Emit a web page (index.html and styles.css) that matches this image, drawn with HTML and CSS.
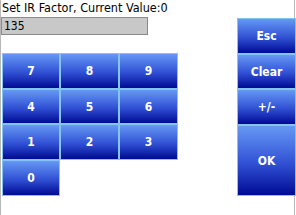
FILE: index.html
```html
<!DOCTYPE html>
<html lang="en">
<head>
    <meta charset="UTF-8">
    <meta name="viewport" content="width=device-width, initial-scale=1.0">
    <title>IR Factor</title>
    <link rel="stylesheet" href="styles.css">
</head>
<body>
  <div id="tela">
    <div id="coluna-esq">
      <p id="titulo">Set IR Factor, Current Value:0</p>
      <div id="entrada">135</div>
      <div id="teclado">
        <button class="tecla">7</button>
        <button class="tecla">8</button>
        <button class="tecla">9</button>
        <button class="tecla">4</button>
        <button class="tecla">5</button>
        <button class="tecla">6</button>
        <button class="tecla">1</button>
        <button class="tecla">2</button>
        <button class="tecla">3</button>
        <button class="tecla">0</button>
      </div>
    </div>
    <div id="coluna-dir">
      <button class="tecla">Esc</button>
      <button class="tecla">Clear</button>
      <button class="tecla">+/-</button>
      <button class="tecla tecla-ok">OK</button>
    </div>
  </div>
</body>
</html>
```

FILE: styles.css
```css
*{
  margin: 0;
  padding: 0;
  box-sizing: border-box;
}

body{
  width: 296px;
  height: 215px;
  overflow: hidden;
  background-color: #fff;
  background-image: linear-gradient(#b8b8b8, #b8b8b8), linear-gradient(#b8b8b8, #b8b8b8);
  background-repeat: no-repeat;
  background-size: 1px 100%, 1px 100%;
  background-position: 0 0, 294px 0;
  font-family: 'DejaVu Sans Condensed', 'DejaVu Sans', sans-serif;
}

#tela{
  display: flex;
  padding-left: 2px;
}

#coluna-esq{
  width: 235px;
}

#titulo{
  height: 17px;
  line-height: 15px;
  font-size: 12.5px;
  color: #000;
}

#entrada{
  width: 147px;
  height: 18px;
  margin-left: -1px;
  border: 1px solid #8a8a8a;
  background-color: #c8c8c8;
  font-size: 12px;
  line-height: 16px;
  padding-left: 2px;
}

#teclado{
  margin-top: 18px;
  display: grid;
  grid-template-columns: 58px 59px 59px;
  grid-template-rows: 36px 35px 36px 36px;
  width: 176px;
}

#coluna-dir{
  margin-top: 18px;
  display: flex;
  flex-direction: column;
  width: 59px;
}

.tecla{
  border: 1px solid #84c4f0;
  background: linear-gradient(#6698f4, #3050d4 55%, #000a94);
  color: #fff;
  font-family: 'DejaVu Sans Condensed', 'DejaVu Sans', sans-serif;
  font-size: 12px;
  font-weight: bold;
  height: 36px;
}

#coluna-dir .tecla:nth-child(2){
  height: 35px;
}

#teclado .tecla{
  height: auto;
}

.tecla-ok{
  height: 71px !important;
}
```
